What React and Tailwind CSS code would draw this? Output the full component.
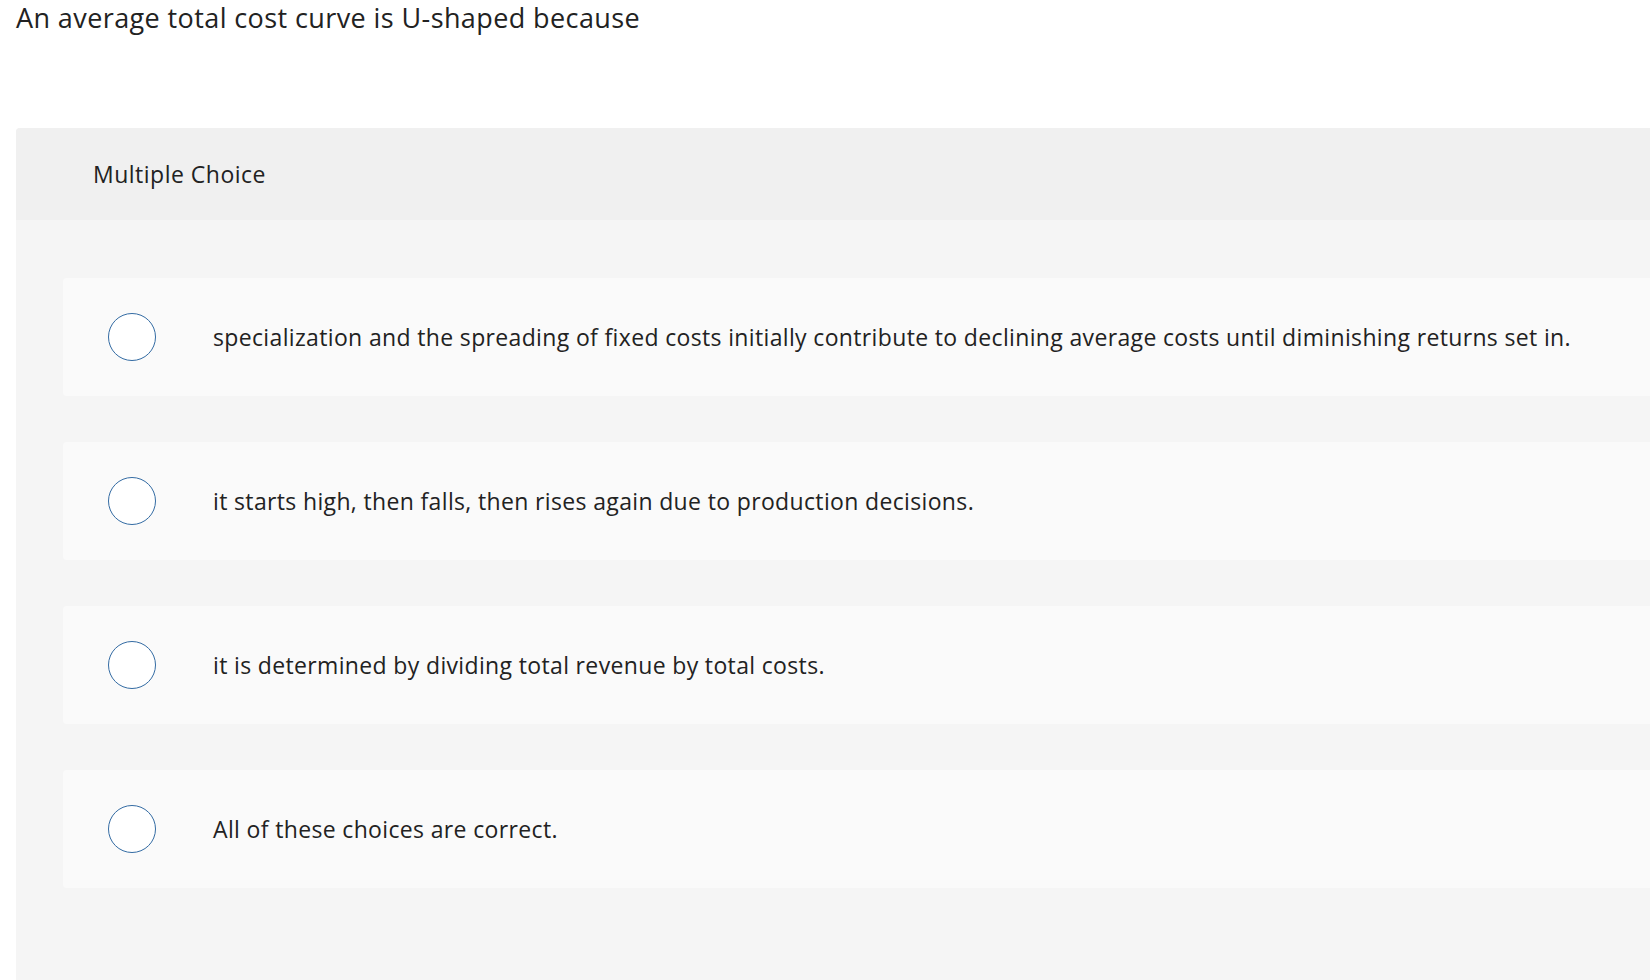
const choices = [
  "specialization and the spreading of fixed costs initially contribute to declining average costs until diminishing returns set in.",
  "it starts high, then falls, then rises again due to production decisions.",
  "it is determined by dividing total revenue by total costs.",
  "All of these choices are correct.",
];

function Choice({ text }) {
  return (
    <div className="flex h-[118px] items-center rounded-l-[4px] bg-[#fafafa]">
      <div className="ml-[45px] h-[48px] w-[48px] shrink-0 rounded-full border-[1.5px] border-[#336ba3] bg-white" />
      <div className="ml-[57px] whitespace-nowrap text-[23px] tracking-[0.35px] text-[#222]">
        {text}
      </div>
    </div>
  );
}

export default function App() {
  return (
    <div
      className="h-[980px] overflow-hidden bg-white"
      style={{ fontFamily: "'Open Sans', Lato, sans-serif" }}
    >
      <h1 className="ml-4 pt-[2px] text-[27px] leading-[32px] tracking-[0.4px] text-[#222]">
        An average total cost curve is U-shaped because
      </h1>

      <div className="ml-4 mt-[94px] rounded-tl-[4px] bg-[#f5f5f5] pb-[200px]">
        <div className="flex h-[92px] items-center rounded-tl-[4px] bg-[#f0f0f0] pl-[77px] text-[23px] tracking-[0.5px] text-[#222]">
          Multiple Choice
        </div>

        <div className="ml-[47px] flex flex-col gap-[46px] pt-[58px]">
          {choices.map((c) => (
            <Choice key={c} text={c} />
          ))}
        </div>
      </div>
    </div>
  );
}
